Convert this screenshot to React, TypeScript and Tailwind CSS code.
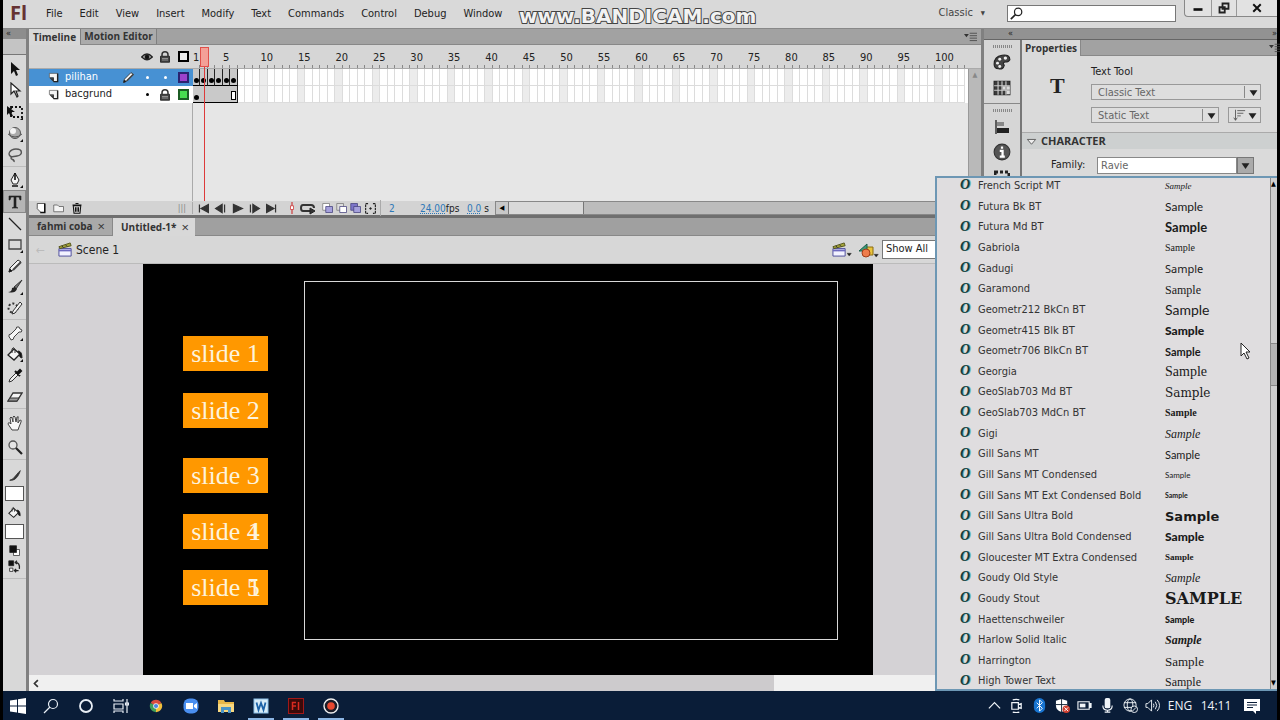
import React from "react";
import type { ReactNode } from "react";

const MENUS = ["File", "Edit", "View", "Insert", "Modify", "Text", "Commands", "Control", "Debug", "Window"];

const serif = "font-['Liberation_Serif',serif]";
const FONTS: { name: string; sample?: string; cls: string }[] = [
  { name: "French Script MT", cls: "font-['Liberation_Serif',serif] text-[9px] italic" },
  { name: "Futura Bk BT", cls: "font-['Lato',sans-serif] text-[12px]" },
  { name: "Futura Md BT", cls: "font-['Lato',sans-serif] text-[13px] font-bold" },
  { name: "Gabriola", cls: "font-['Liberation_Serif',serif] text-[10px]" },
  { name: "Gadugi", cls: "font-['Noto_Sans',sans-serif] text-[11px]" },
  { name: "Garamond", cls: "font-['Liberation_Serif',serif] text-[12px]" },
  { name: "Geometr212 BkCn BT", cls: "font-['Lato',sans-serif] text-[14px]" },
  { name: "Geometr415 Blk BT", cls: "font-['Lato',sans-serif] text-[12px] font-black" },
  { name: "Geometr706 BlkCn BT", cls: "font-['Lato',sans-serif] text-[11px] font-bold" },
  { name: "Georgia", cls: "font-['Liberation_Serif',serif] text-[14px]" },
  { name: "GeoSlab703 Md BT", cls: "font-['DejaVu_Serif',serif] text-[12px]" },
  { name: "GeoSlab703 MdCn BT", cls: "font-['Liberation_Serif',serif] text-[10px] font-bold" },
  { name: "Gigi", cls: "font-['Liberation_Serif',serif] text-[12px] italic" },
  { name: "Gill Sans MT", cls: "font-['Lato',sans-serif] text-[11px]" },
  { name: "Gill Sans MT Condensed", cls: "font-['Lato',sans-serif] text-[8px]" },
  { name: "Gill Sans MT Ext Condensed Bold", cls: "font-['Lato',sans-serif] text-[7px] font-bold" },
  { name: "Gill Sans Ultra Bold", cls: "font-['DejaVu_Sans',sans-serif] text-[13px] font-bold" },
  { name: "Gill Sans Ultra Bold Condensed", cls: "font-['Lato',sans-serif] text-[12px] font-black" },
  { name: "Gloucester MT Extra Condensed", cls: "font-['Liberation_Serif',serif] text-[9px] font-bold" },
  { name: "Goudy Old Style", cls: "font-['Liberation_Serif',serif] text-[12px] italic" },
  { name: "Goudy Stout", sample: "SAMPLE", cls: "font-['DejaVu_Serif',serif] text-[16px] font-black" },
  { name: "Haettenschweiler", cls: "font-['Lato',sans-serif] text-[9px] font-black" },
  { name: "Harlow Solid Italic", cls: "font-['Liberation_Serif',serif] text-[12px] font-bold italic" },
  { name: "Harrington", cls: "font-['Liberation_Serif',serif] text-[13px]" },
  { name: "High Tower Text", cls: "font-['Liberation_Serif',serif] text-[12px]" },
];

const FRAMES = Array.from({ length: 103 }, (_, i) => i + 1);

function Icon({ size = 16, box = 16, children }: { size?: number; box?: number; children: ReactNode }) {
  return (
    <svg width={size} height={size} viewBox={`0 0 ${box} ${box}`} fill="none" stroke="#222" strokeWidth="1" className="shrink-0" aria-hidden="true">
      {children}
    </svg>
  );
}

const corner = <path d="M16 13v3h-3z" fill="#111" stroke="none" />;

function Pencil() {
  return (
    <>
      <path d="M2 14l1-4 8-8 3 2-8 8z" fill="#f4f4f4" stroke="#333" />
      <path d="M6 12l8-8" stroke="#444" strokeWidth="2" />
      <path d="M2 14l1-3 2 2z" fill="#111" />
    </>
  );
}

function Bucket() {
  return (
    <>
      <path d="M1 9l6-6 6 5-6 6z" fill="#f5f5f5" stroke="#222" strokeWidth="1.3" />
      <path d="M5 7V3q2-3 3 1v3" stroke="#333" />
      <path d="M11 5q4 0 4 7l-2-1-1-4z" fill="#111" />
    </>
  );
}

type Tool = { label: string; active?: boolean; art: ReactNode };

const TOOL_GROUPS: { height: string; tools: Tool[] }[] = [
  {
    height: "h-[109px]",
    tools: [
      { label: "Selection", art: <path d="M4 1v12l3-3 2 5 2-1-2-5h4z" fill="#111" stroke="none" /> },
      { label: "Subselection", art: <path d="M4 1v11l3-3 3 6 1-1-2-5h4z" fill="#fff" stroke="#222" strokeWidth="1.2" /> },
      {
        label: "Free transform",
        art: (
          <>
            <path d="M4 3h11v10H4z" stroke="#111" strokeDasharray="2 2" strokeWidth="1.8" />
            <path d="M0 2v9l2-2 2 4 2-1-2-4h4z" fill="#111" stroke="none" />
            {corner}
          </>
        ),
      },
      {
        label: "3D rotation",
        art: (
          <>
            <circle cx="8" cy="7" r="5.5" fill="#aaa" stroke="#555" />
            <circle cx="6" cy="5" r="3" fill="#f4f4f4" stroke="none" />
            <path d="M1 8q7 6 14 0" stroke="#555" />
            {corner}
          </>
        ),
      },
      {
        label: "Lasso",
        art: <path d="M5 10c-6-2-2-8 4-8 7 0 7 6 1 7-3 1-6 0-6 2s4 1 3 4" stroke="#555" strokeWidth="1.4" />,
      },
    ],
  },
  {
    height: "h-[151px]",
    tools: [
      {
        label: "Pen",
        art: (
          <>
            <path d="M8 1l4 7-2 4H6L4 8z" fill="#f4f4f4" stroke="#222" />
            <path d="M8 1v7M5 14h6" stroke="#111" strokeWidth="1.6" />
            {corner}
          </>
        ),
      },
      { label: "Text", active: true, art: <path d="M2 2h12v4h-1l-1-3H9v10l2 1H5l2-1V3H4L3 6H2z" fill="#222" stroke="#222" strokeWidth="0.6" /> },
      { label: "Line", art: <path d="M2 2l12 12" stroke="#222" strokeWidth="1.3" /> },
      {
        label: "Rectangle",
        art: (
          <>
            <path d="M2 3h12v9H2z" fill="#d9d9d9" stroke="#444" strokeWidth="1.3" />
            {corner}
          </>
        ),
      },
      { label: "Pencil", art: <Pencil /> },
      {
        label: "Brush",
        art: (
          <>
            <path d="M15 1L7 8l2 2z" fill="#777" stroke="#333" />
            <path d="M1 13q4 0 4-4l3-1 2 2q-2 5-9 3z" fill="#222" stroke="none" />
            {corner}
          </>
        ),
      },
      {
        label: "Deco",
        art: (
          <>
            <circle cx="6" cy="8" r="4.5" stroke="#333" strokeWidth="2" strokeDasharray="2 2" />
            <path d="M6 11l7-9 2 2-7 9-3 1z" fill="#f4f4f4" stroke="#333" />
          </>
        ),
      },
    ],
  },
  {
    height: "h-[87px]",
    tools: [
      {
        label: "Bone",
        art: (
          <>
            <path d="M2 12q-1-3 2-3l5-5q0-3 3-2l1 2 2 1q0 3-3 2l-5 5q0 3-3 3l-1-2z" fill="#f6f6f6" stroke="#444" />
            {corner}
          </>
        ),
      },
      {
        label: "Paint bucket",
        art: (
          <>
            <Bucket />
            {corner}
          </>
        ),
      },
      {
        label: "Eyedropper",
        art: (
          <>
            <path d="M2 14l1-3 6-6 2 2-6 6z" fill="#eee" stroke="#333" />
            <path d="M8 3l5 5M10 5l3-3 1 1-3 3z" stroke="#111" strokeWidth="2" />
          </>
        ),
      },
      {
        label: "Eraser",
        art: (
          <>
            <path d="M1 12l5-8h9l-5 8z" fill="#f4f4f4" stroke="#333" strokeWidth="1.3" />
            <path d="M3 9h9l-2 3H1z" fill="#999" stroke="#333" />
          </>
        ),
      },
    ],
  },
  {
    height: "h-[49px]",
    tools: [
      {
        label: "Hand",
        art: <path d="M5 15l-4-6q0-2 2-1l1 1-1-6q1-2 2 0l1 4V2q1-2 2 0l1 5 1-5q2-1 1 1v5l2-3q2 0 1 2l-2 5-1 3z" fill="#f8f8f8" stroke="#444" />,
      },
      {
        label: "Zoom",
        art: (
          <>
            <circle cx="6" cy="6" r="4" fill="#e4e4e4" stroke="#555" strokeWidth="1.3" />
            <path d="M9 9l6 6" stroke="#222" strokeWidth="2.2" />
          </>
        ),
      },
    ],
  },
];

function Toolbar() {
  return (
    <aside className="flex w-[23px] shrink-0 flex-col bg-[#d8d8d8]">
      <div className="h-[10px] bg-[#8d8d8d] pl-[3px] text-[9px] leading-[9px] text-[#222]">«</div>
      <div className="mb-[3px] h-[16px] border-b border-[#777] bg-[#c4c4c4]" />
      {TOOL_GROUPS.map((g) => (
        <div key={g.tools[0].label} className={`flex flex-col border-b border-[#bdbdbd] ${g.height} mb-[2px]`}>
          {g.tools.map((t) => (
            <button
              key={t.label}
              type="button"
              aria-label={t.label}
              className={`flex min-h-0 flex-1 items-center justify-center ${t.active ? "border border-[#888] bg-[#b5b5b5]" : ""}`}
            >
              <Icon size={16}>{t.art}</Icon>
            </button>
          ))}
        </div>
      ))}
      <div className="flex flex-col items-center border-b border-[#bdbdbd] pt-[6px] pb-[5px]">
        <Icon size={14}>
          <path d="M2 14q3-1 4-2l6-7 2-2-1 3q-4 9-11 8" fill="#333" stroke="#333" />
        </Icon>
        <button type="button" aria-label="Stroke color" className="mt-[4px] h-[15px] w-[19px] border border-[#555] bg-white" />
        <div className="my-[5px]">
          <Icon size={13}>
            <Bucket />
          </Icon>
        </div>
        <button type="button" aria-label="Fill color" className="h-[15px] w-[19px] border border-[#555] bg-white" />
        <button type="button" aria-label="Black and white" className="mt-[6px]">
          <Icon size={12}>
            <path d="M6 6h8v8H6z" fill="#fff" stroke="#333" />
            <path d="M1 1h9v9H1z" fill="#111" />
          </Icon>
        </button>
        <button type="button" aria-label="Swap colors" className="mt-[3px]">
          <Icon size={13}>
            <path d="M1 1h6v6H1z" fill="#111" />
            <path d="M2 10h4v4H2z" fill="#fff" />
            <path d="M9 3q6 0 5 8M8 13h5M10 11l-2 2 2 2M11 1L9 3l2 2" strokeWidth="1.6" />
          </Icon>
        </button>
      </div>
    </aside>
  );
}

function PageIcon() {
  return (
    <Icon size={11}>
      <path d="M2 2h12v12H8V8H2z" fill="#f4f4f4" stroke="#555" />
      <path d="M14 2v12H8" stroke="#222" strokeWidth="2" />
      <path d="M3 9l5 5V9z" fill="#333" stroke="#333" />
    </Icon>
  );
}

function Lock() {
  return (
    <Icon size={12}>
      <path d="M4 7V5q0-4 4-4t4 4v2" stroke="#333" strokeWidth="2" />
      <path d="M2 7h12v8H2z" fill="#444" stroke="#111" />
      <path d="M4 10h8M4 12h8" stroke="#aaa" />
    </Icon>
  );
}

const layerGrid = "grid w-[164px] shrink-0 grid-cols-[36px_1fr_20px_18px_18px_19px] items-center";
const frameGrid = "grid min-w-0 flex-1 grid-cols-[repeat(103,minmax(0,1fr))]";

function PanelMenuIcon() {
  return (
    <Icon size={13}>
      <path d="M0 5h6L3 9z" fill="#333" stroke="none" />
      <path d="M7 4h9M7 7h9M7 10h9M7 13h9" stroke="#444" />
    </Icon>
  );
}

function LayerRow({ name, selected }: { name: string; selected?: boolean }) {
  return (
    <div className="flex h-[17px]">
      <div className={`${layerGrid} ${selected ? "bg-[#4791d3] text-white" : "bg-white text-[#222]"}`}>
        <span className="flex justify-end pr-[6px]">
          <PageIcon />
        </span>
        <span className="pb-[2px] leading-[14px]">{name}</span>
        <span className="flex justify-center">
          {selected && (
            <Icon size={13}>
              <Pencil />
            </Icon>
          )}
        </span>
        <span className="flex justify-center">
          <i className={`size-[3px] rounded-full ${selected ? "bg-white" : "bg-black"}`} />
        </span>
        <span className="flex justify-center">{selected ? <i className="size-[3px] rounded-full bg-white" /> : <Lock />}</span>
        <span className="flex justify-center">
          <i className={`size-[11px] border-2 ${selected ? "border-[#2b2370] bg-[#9c42cc]" : "border-[#1c5c24] bg-[#48dc50]"}`} />
        </span>
      </div>
      <div className={frameGrid}>
        {FRAMES.map((f) => {
          const keyed = f <= 6;
          if (!keyed)
            return <span key={f} className={`border-r border-b border-[#dcdcdc] ${f % 5 === 0 ? "bg-[#ececec]" : "bg-white"}`} />;
          return (
            <span
              key={f}
              className={`flex items-end justify-center border-b border-b-black bg-[#c9c9c9] pb-[2px] ${selected || f === 6 ? "border-r border-r-[#222]" : ""}`}
            >
              {(selected || f === 1) && <i className="size-[5px] shrink-0 rounded-full bg-black" />}
              {!selected && f === 6 && <i className="h-[9px] w-[5px] shrink-0 border border-black bg-white" />}
            </span>
          );
        })}
      </div>
      <div className="w-[3px] shrink-0 bg-white" />
    </div>
  );
}

const PLAYBACK: { label: string; d: string }[] = [
  { label: "First frame", d: "M3 3v10M14 3v10L5 8z" },
  { label: "Step back", d: "M13 3v10M10 3v10L2 8z" },
  { label: "Play", d: "M3 3v10l11-5z" },
  { label: "Step forward", d: "M3 3v10M6 3v10l8-5z" },
  { label: "Last frame", d: "M13 3v10M2 3v10l9-5z" },
];

function Timeline() {
  return (
    <section className="flex h-[189px] shrink-0 flex-col border-b-[3px] border-[#6f6f6f] bg-[#e6e6e6]">
      <div className="flex h-4 shrink-0 items-stretch border-b border-[#888] bg-[#a2a2a2] font-['Open_Sans',sans-serif] text-[10px] font-bold text-[#333]">
        <button type="button" className="-mb-px w-[51px] bg-[#d8d8d8]">Timeline</button>
        <button type="button" className="w-[77px] border-x border-[#808080] bg-[#ababab]">Motion Editor</button>
        <button type="button" aria-label="Panel menu" className="mr-[4px] ml-auto">
          <PanelMenuIcon />
        </button>
      </div>
      <div className="relative flex min-h-0 flex-1 flex-col">
        <div className="flex h-[24px] shrink-0 border-b border-[#aaa] bg-[#d6d6d6]">
          <div className={layerGrid}>
            <span className="col-start-4 flex justify-center">
              <Icon size={12}>
                <path d="M1 8q7-8 14 0-7 7-14 0z" fill="#eee" stroke="#222" strokeWidth="2" />
                <circle cx="8" cy="8" r="3" fill="#111" />
              </Icon>
            </span>
            <span className="flex justify-center">
              <Lock />
            </span>
            <span className="flex justify-center">
              <i className="size-[11px] border-2 border-black bg-[#eee]" />
            </span>
          </div>
          <div className={frameGrid}>
            {FRAMES.map((f) => (
              <span key={f} className="flex min-w-0 flex-col justify-between overflow-visible pt-[6px] text-[#222]">
                <span className="h-[14px] whitespace-nowrap leading-[14px]">{f === 1 || f % 5 === 0 ? f : ""}</span>
                <i className="h-[3px] border-r border-[#888]" />
              </span>
            ))}
          </div>
          <div className="w-[16px] shrink-0" />
        </div>
        <div className="flex min-h-0 flex-1">
          <div className="flex min-w-0 flex-1 flex-col">
            <LayerRow name="pilihan" selected />
            <LayerRow name="bacgrund" />
            <div className="w-[164px] flex-1 border-r border-[#aaa]" />
          </div>
          <div className="w-[13px] shrink-0 border-l border-[#999] bg-[#b9b9b9] text-center text-[7px] leading-[12px] text-[#888]">▲</div>
        </div>
        <div className="pointer-events-none absolute top-[2px] bottom-[6px] left-[171px] flex w-[9px] flex-col items-center">
          <i className="h-[20px] w-full border border-[#e0504a] bg-[#f79a90]/90" />
          <i className="w-px flex-1 bg-[#dd3a3a]" />
        </div>
        <div className="relative flex h-[14px] shrink-0 items-center bg-[#d3d3d3]">
          <div className="flex w-[164px] items-center gap-[6px] border-r border-[#aaa] pl-[6px]">
            <button type="button" aria-label="New layer"><Icon size={12}><path d="M3 2h10v12H8l-5-5z" fill="#fff" stroke="#333" /><path d="M13 2v12H7" stroke="#111" strokeWidth="2" /></Icon></button>
            <button type="button" aria-label="New folder"><Icon size={12}><path d="M1 13V4h5l2 2h6v7z" fill="#f4f4f4" stroke="#555" /></Icon></button>
            <button type="button" aria-label="Delete"><Icon size={12}><path d="M3 5h10l-1 10H4zM2 4h12M6 2h4M6 7v6M8 7v6M10 7v6" stroke="#111" strokeWidth="1.4" /></Icon></button>
            <span className="mr-[6px] ml-auto text-[9px] leading-none text-[#888]">|||</span>
          </div>
          <div className="flex items-center gap-[4px] pl-[4px]">
            {PLAYBACK.map((p) => (
              <button key={p.label} type="button" aria-label={p.label}>
                <Icon size={13}>
                  <path d={p.d} fill="#333" stroke="#333" strokeWidth="1.5" />
                </Icon>
              </button>
            ))}
          </div>
          <div className="ml-[8px] flex items-center gap-[2px] border-r border-[#aaa] pr-[3px]">
            <Icon size={12}><path d="M8 0v16" stroke="#c33" strokeWidth="1.5" /><path d="M6 5h4v5H6z" fill="#fff" stroke="#c33" /></Icon>
            <button type="button" aria-label="Loop" className="mr-[4px]"><Icon size={16}><path d="M5 5H3q-2 0-2 3t2 3h8M4 5h7q3 0 3 3" stroke="#333" strokeWidth="2" /><path d="M10 8l5 3-5 3z" fill="#333" /></Icon></button>
            <Icon size={12}><path d="M1 2h9v9H1z" fill="#fff" stroke="#777" /><path d="M5 6h9v8H5z" fill="#a5a0dc" stroke="#44407c" /></Icon>
            <Icon size={12}><path d="M1 2h9v9H1z" fill="#ddd" stroke="#777" /><path d="M5 6h9v8H5z" fill="#fff" stroke="#44407c" /></Icon>
            <Icon size={12}><path d="M1 2h9v9H1z" fill="#7c74c8" stroke="#44407c" /><path d="M5 6h9v8H5z" fill="#a5a0dc" stroke="#44407c" /></Icon>
            <Icon size={13}><path d="M5 2H2v12h3M11 2h3v12h-3" strokeWidth="1.4" strokeDasharray="3 1" /><circle cx="8" cy="8" r="1" fill="#222" /></Icon>
          </div>
          <div className="flex items-center text-[10px] leading-[13px] text-[#2d78b8]">
            <span className="ml-[8px] w-[31px]">2</span>
            <span className="w-[47px] whitespace-nowrap"><u className="decoration-dotted">24.00</u><span className="text-[#222]">fps</span></span>
            <span className="w-[28px] whitespace-nowrap"><u className="decoration-dotted">0.0</u><span className="text-[#222]"> s</span></span>
          </div>
          <div className="flex h-full min-w-0 flex-1 border border-[#888] bg-[#bcbcbc]">
            <button type="button" aria-label="Scroll left" className="w-[13px] border-r border-[#777] bg-[#c8c8c8] text-[7px] leading-[10px]">◀</button>
            <div className="w-[75px] border-r border-[#777] bg-[#d9d9d9]" />
          </div>
        </div>
      </div>
    </section>
  );
}

function Clapper() {
  return (
    <Icon size={15}>
      <path d="M1 7h13v8H1z" fill="#f2f2ff" stroke="#4a4a9a" />
      <path d="M1 8h13v2H1z" fill="#6e6ac0" stroke="none" />
      <path d="M1 5l12-4 1 3-12 3z" fill="#a5a53a" stroke="#55551a" />
      <path d="M4 4l2 2M8 3l2 2" stroke="#333" />
    </Icon>
  );
}

const SLIDES: { text: string; ghost?: string; top: string }[] = [
  { text: "1", top: "top-[72px]" },
  { text: "2", top: "top-[129px]" },
  { text: "3", top: "top-[194px]" },
  { text: "4", ghost: "1", top: "top-[250px]" },
  { text: "5", ghost: "1", top: "top-[306px]" },
];

function Document() {
  return (
    <section className="flex min-h-0 flex-1 flex-col">
      <div className="flex h-[18px] shrink-0 items-stretch border-b border-[#888] bg-[#a0a0a0] font-['Open_Sans',sans-serif] text-[10px] font-bold whitespace-nowrap text-[#333]">
        <button type="button" className="flex w-[84px] items-center justify-between border-r border-[#888] bg-[#a9a9a9] pr-[7px] pl-[8px]">
          fahmi coba <span className="text-[13px] leading-none font-normal">×</span>
        </button>
        <button type="button" className="-mb-px flex w-[82px] items-center justify-between bg-[#d8d8d8] pr-[6px] pl-[8px]">
          Untitled-1* <span className="text-[13px] leading-none font-normal">×</span>
        </button>
      </div>
      <div className="flex h-[28px] shrink-0 items-center border-b border-[#bbb] bg-[#d7d7d7]">
        <span className="w-[29px] pl-[7px] text-[12px] text-[#bbb]">←</span>
        <Clapper />
        <span className="ml-[3px] flex-1 text-[12px] text-[#222]">Scene 1</span>
        <button type="button" aria-label="Edit scene" className="flex w-[26px] items-end">
          <Clapper />
          <Icon size={5}><path d="M0 4h14l-7 9z" fill="#222" /></Icon>
        </button>
        <button type="button" aria-label="Edit symbols" className="flex w-[24px] items-end">
          <Icon size={16}>
            <path d="M8 5h7v8H8z" fill="#e8c43c" stroke="#8a6a10" />
            <path d="M1 9l8-7v7z" fill="#3c9a78" stroke="#1c5c48" />
            <circle cx="8" cy="11" r="4" fill="#ee7c4c" stroke="#a03c18" />
          </Icon>
          <Icon size={5}><path d="M0 4h14l-7 9z" fill="#222" /></Icon>
        </button>
        <select aria-label="Zoom level" className="mr-[4px] h-[19px] w-[95px] appearance-none border border-[#777] bg-white pl-[3px] text-[11px] text-[#222]">
          <option>Show All</option>
        </select>
      </div>
      <div className="flex min-h-0 flex-1 overflow-hidden bg-[#d4d2d5] pl-[114px]">
        <div className="relative h-full w-[730px] shrink-0 bg-black">
          {SLIDES.map((s) => (
            <div
              key={s.text}
              className={`absolute left-[40px] ${s.top} flex h-[35px] w-[85px] items-center justify-center bg-[#ff9800] ${serif} text-[26px] leading-none text-[#fdf3dc]`}
            >
              slide {s.text}
              {s.ghost && <span className="absolute right-[7px]">{s.ghost}</span>}
            </div>
          ))}
          <div className="absolute top-[17px] left-[161px] h-[359px] w-[534px] border border-[#d8d8d8]" />
        </div>
      </div>
      <div className="flex h-4 shrink-0 bg-[#f0f0f0]">
        <button type="button" aria-label="Scroll left" className="flex w-[191px] items-center pl-[2px]">
          <Icon size={11}><path d="M10 3L5 8l5 5" stroke="#333" strokeWidth="2.4" /></Icon>
        </button>
        <div className="w-[554px] bg-[#cdcbcd]" />
      </div>
    </section>
  );
}

function Grip() {
  return <i className="my-[5px] block h-[3px] w-[19px] shrink-0 bg-[repeating-linear-gradient(90deg,#888_0_1px,transparent_1px_2px)]" />;
}

function Dock() {
  return (
    <div className="flex w-[38px] shrink-0 flex-col items-center overflow-hidden border-r-2 border-[#777] bg-[#d6d6d6]">
      <Grip />
      <button type="button" aria-label="Color">
        <Icon size={18}>
          <path d="M1 10Q1 3 8 2t7 4q-1 2-4 2t-1 3q-1 4-5 3-4 0-4-4z" fill="#444" />
          <circle cx="4" cy="9" r="1.3" fill="#eee" stroke="none" />
          <circle cx="6" cy="5.5" r="1.3" fill="#eee" stroke="none" />
          <circle cx="11" cy="4.5" r="1.5" fill="#eee" stroke="none" />
          <circle cx="6" cy="12" r="1.3" fill="#eee" stroke="none" />
        </Icon>
      </button>
      <button type="button" aria-label="Swatches" className="mt-[8px]">
        <Icon size={18}>
          <path d="M1 2h14v12H1z" fill="#3a3a3a" />
          <path d="M1 6h14M1 10h14M4.5 2v12M8 2v12M11.5 2v12" stroke="#ccc" />
          <path d="M8.5 6.5H11v3H8.5zM12 10.5h3v3h-3zM12 6.5h3v3h-3z" fill="#ddd" stroke="none" />
        </Icon>
      </button>
      <div className="mt-[6px] w-full border-t border-[#888]" />
      <Grip />
      <button type="button" aria-label="Align" className="mt-[2px]">
        <Icon size={16}>
          <path d="M2 1v14" stroke="#333" strokeWidth="1.5" />
          <path d="M3 3h7v4H3z" fill="#888" stroke="none" />
          <path d="M3 9h12v5H3z" fill="#222" stroke="none" />
        </Icon>
      </button>
      <button type="button" aria-label="Info" className="mt-[8px]">
        <Icon size={18}>
          <circle cx="8" cy="8" r="7" fill="#555" stroke="#333" />
          <path d="M8 3v2M6 7h2.5v5M6 12h4.5" stroke="#fff" strokeWidth="2" />
        </Icon>
      </button>
      <button type="button" aria-label="Transform" className="mt-[8px]">
        <Icon size={16}><path d="M1 3h14v10H1z" stroke="#222" strokeDasharray="3 2" strokeWidth="3" /></Icon>
      </button>
    </div>
  );
}

function DownArrow() {
  return (
    <Icon size={9}>
      <path d="M1 4h14l-7 10z" fill="#222" stroke="none" />
    </Icon>
  );
}

function Drop({ label, value, width }: { label: string; value: string; width: string }) {
  return (
    <span className={`relative flex h-[16px] ${width}`}>
      <select aria-label={label} className="h-full w-full appearance-none border border-[#999] bg-[#dedede] pl-[6px] text-[11px] leading-[13px] text-[#666]">
        <option>{value}</option>
      </select>
      <span className="pointer-events-none absolute inset-y-[2px] right-[3px] flex items-center border-l border-[#888] pl-[4px]">
        <DownArrow />
      </span>
    </span>
  );
}

function Properties() {
  return (
    <section className="flex min-w-0 flex-1 flex-col bg-[#dadada]">
      <div className="flex h-4 shrink-0 border-b border-[#888] bg-[#a2a2a2] font-['Open_Sans',sans-serif] text-[10px] font-bold text-[#333]">
        <button type="button" className="-mb-px w-[59px] border-r border-[#888] bg-[#dadada]">Properties</button>
        <button type="button" aria-label="Panel menu" className="-mr-[5px] ml-auto"><PanelMenuIcon /></button>
      </div>
      <div className="flex h-[77px] shrink-0 border-b border-[#aaa]">
        <span className={`w-[69px] pt-[17px] pl-[28px] ${serif} text-[22px] leading-[26px] font-bold text-[#222]`}>T</span>
        <div className="flex flex-col pt-[9px]">
          <span className="mb-[5px] leading-[14px] text-[#222]">Text Tool</span>
          <Drop label="Text engine" value="Classic Text" width="w-[170px]" />
          <div className="mt-[7px] flex gap-[9px]">
            <Drop label="Text type" value="Static Text" width="w-[128px]" />
            <button type="button" aria-label="Text orientation" className="flex h-[16px] w-[33px] items-center justify-center gap-[2px] border border-[#999] bg-[#dedede]">
              <Icon size={14}><path d="M4 2v12M2 11l2 3 2-3M6 3h9M6 6h7M6 9h4" stroke="#555" /></Icon>
              <DownArrow />
            </button>
          </div>
        </div>
      </div>
      <h2 className="flex h-[16px] items-center gap-[4px] bg-[#cdd0d0] pl-[4px] font-['Open_Sans',sans-serif] text-[11px] font-bold text-[#333]">
        <Icon size={11}><path d="M2 5h12l-6 7z" fill="#eee" stroke="#555" strokeWidth="1.3" /></Icon>
        CHARACTER
      </h2>
      <div className="mt-[8px] flex items-center pl-[29px]">
        <label htmlFor="family" className="w-[46px] text-[#222]">Family:</label>
        <input id="family" defaultValue="Ravie" className="h-[17px] w-[140px] border border-[#888] bg-white pl-[3px] text-[11px] text-[#666]" />
        <button type="button" aria-label="Show fonts" className="flex h-[17px] w-[17px] items-center justify-center border border-[#777] bg-[#aaa]"><DownArrow /></button>
      </div>
    </section>
  );
}

function FontMenu() {
  return (
    <div className="absolute top-[176px] right-[3px] z-10 flex h-[515px] w-[342px] overflow-hidden border-2 border-r-0 border-[#6d97b4] bg-[#dfdddf]">
      <ul role="listbox" aria-label="Fonts" className="-mt-[2px] flex h-[516px] flex-1 flex-col text-[#333]">
        {FONTS.map((f) => (
          <li key={f.name} role="option" aria-selected="false" className="grid min-h-0 flex-1 grid-cols-[18px_187px_1fr] items-center pl-[23px] whitespace-nowrap">
            <span className={`${serif} pb-[2px] text-[14px] leading-none font-bold text-[#173c3c] italic [text-shadow:1px_0_#6fb0a8]`}>O</span>
            <span>{f.name}</span>
            <span className={`leading-none text-[#1a1a1a] ${f.cls}`}>{f.sample ?? "Sample"}</span>
          </li>
        ))}
      </ul>
      <div className="flex w-[7px] shrink-0 flex-col overflow-hidden border-l border-[#888] bg-[#cfcfcf] text-[7px] leading-[12px]">
        <span>▲</span>
        <div className="mt-[153px] h-[43px] border-y border-[#888] bg-[#b3b3b3]" />
        <span className="mt-auto">▼</span>
      </div>
    </div>
  );
}

const TASKS: { label: string; open?: boolean; art: ReactNode }[] = [
  { label: "Search", art: <><circle cx="10" cy="6" r="4.5" stroke="#e8eef5" strokeWidth="1.2" /><path d="M7 9l-6 6" stroke="#e8eef5" strokeWidth="1.3" /></> },
  { label: "Cortana", art: <circle cx="8" cy="8" r="6" stroke="#e8eef5" strokeWidth="1.8" /> },
  { label: "Task view", art: <path d="M1 1v2h9V1M1 6h9v5H1zM1 15v-2h9v2M14 1v14M12.5 5h3v2h-3z" stroke="#e8eef5" strokeWidth="1.2" /> },
  {
    label: "Chrome",
    art: (
      <g stroke="none">
        <path d="M8 8L1.9 4.5A7 7 0 0 1 14.1 4.5z" fill="#d94b3e" />
        <path d="M8 8l6.1-3.5A7 7 0 0 1 8 15z" fill="#f2c03c" />
        <path d="M8 8v7A7 7 0 0 1 1.9 4.5z" fill="#3f9d58" />
        <circle cx="8" cy="8" r="3.2" fill="#f2f2f2" />
        <circle cx="8" cy="8" r="2.4" fill="#4a84e0" />
      </g>
    ),
  },
  { label: "Zoom", art: <g stroke="none"><rect x="0.5" y="0.5" width="15" height="15" rx="6" fill="#4a8ff0" /><path d="M3 5h7v6H3zM11 7l3-2v6l-3-2z" fill="#fff" /></g> },
  { label: "File explorer", art: <g stroke="none"><path d="M0 2h6l1 2h9v10H0z" fill="#e8b84a" /><path d="M0 6h16v8H0z" fill="#f8d880" /><path d="M3 9h10v6h-3v-3H6v3H3z" fill="#4a94c8" /></g> },
  { label: "Word", open: true, art: <><rect x="1" y="1" width="14" height="14" fill="#d8ecf8" stroke="#8cc0e8" /><path d="M3.5 4.5L5.5 12 8 5l2.5 7 2-7.5" stroke="#1c62a8" strokeWidth="1.8" /></> },
  { label: "Flash", open: true, art: <><rect x="0.5" y="0.5" width="15" height="15" fill="#3a0a0a" stroke="#a01818" /><path d="M4.5 12V4.5H8M4.5 8H8M10.5 4v8" stroke="#d82a20" strokeWidth="1.5" /></> },
  { label: "Recorder", open: true, art: <><circle cx="8" cy="8" r="7" fill="#1c1c28" stroke="#eee" strokeWidth="1.4" /><circle cx="8" cy="8" r="3.8" fill="#e84830" stroke="none" /></> },
];

const trayInk = "#f0f4f8";
const TRAY: { label: string; art: ReactNode }[] = [
  { label: "Show hidden icons", art: <path d="M2 11l6-6 6 6" stroke={trayInk} strokeWidth="1.3" /> },
  { label: "Meet now", art: <path d="M3 5h7v7H3zM10 7l3-1v5l-3-1M4 2q4-1 7 0M4 15q4 1 7 0" stroke={trayInk} strokeWidth="1.3" /> },
  { label: "Bluetooth", art: <><rect x="2" y="0" width="12" height="16" rx="6" fill="#1874d0" stroke="none" /><path d="M5 5l6 6-3 3V2l3 3-6 6" stroke="#fff" /></> },
  { label: "Security", art: <g stroke="none"><path d="M7 1l6 2v5q-1 5-6 7-6-2-6-7V3z" fill="#fff" /><path d="M7 1v14M1 7h12" stroke="#123" /><circle cx="12" cy="12" r="4" fill="#d04030" /><path d="M10 10l4 4M14 10l-4 4" stroke="#fff" /></g> },
  { label: "Battery", art: <><path d="M1 4h12v8H1zM14 6v4h1V6z" stroke={trayInk} strokeWidth="1.2" /><path d="M3 6h6v4H3z" fill={trayInk} stroke="none" /></> },
  { label: "Microphone", art: <><rect x="5" y="0" width="6" height="11" rx="2" fill={trayInk} stroke="none" /><path d="M3 8q0 5 5 5t5-5M8 13v2M5 15h6" stroke={trayInk} strokeWidth="1.2" /></> },
  { label: "Network", art: <><circle cx="7.5" cy="7.5" r="6.5" stroke={trayInk} /><ellipse cx="7.5" cy="7.5" rx="3" ry="6.5" stroke={trayInk} /><path d="M1 5h13M1 10h13" stroke={trayInk} /><circle cx="12" cy="12" r="3.5" fill="#0a1d38" stroke={trayInk} /><path d="M10 14l4-4" stroke={trayInk} /></> },
  { label: "Volume", art: <path d="M1 6v4h2l4 4V2L3 6zM9 6q1 2 0 4M11 4q3 4 0 8M13 2q5 6 0 12" stroke={trayInk} /> },
];

function Taskbar() {
  return (
    <footer className="flex h-[29px] shrink-0 items-stretch bg-[#0a1d38] font-['Open_Sans',sans-serif] text-[12px] text-[#f0f4f8]">
      <button type="button" aria-label="Start" className="flex w-[30px] items-center justify-center">
        <Icon size={16}><path d="M0 2.5l7-1v6H0zM8 1.3L16 0v7.5H8zM0 8.5h7v6l-7-1zM8 8.5h8V16l-8-1.3z" fill="#fff" stroke="none" /></Icon>
      </button>
      {TASKS.map((t) => (
        <button key={t.label} type="button" aria-label={t.label} className="flex w-[35px] flex-col items-center">
          <span className="flex flex-1 items-center pt-[2px]"><Icon size={t.label === "Chrome" ? 14 : 16}>{t.art}</Icon></span>
          <i className={`h-[2px] w-[26px] ${t.open ? "bg-[#8db6e4]" : ""}`} />
        </button>
      ))}
      <div className="ml-auto grid w-[181px] grid-cols-8">
        {TRAY.map((t) => (
          <button key={t.label} type="button" aria-label={t.label} className="flex items-center justify-center">
            <Icon size={15}>{t.art}</Icon>
          </button>
        ))}
      </div>
      <button type="button" className="w-[32px]">ENG</button>
      <button type="button" className="w-[40px]">14:11</button>
      <button type="button" aria-label="Notifications" className="mr-[9px] flex w-[32px] items-center justify-center">
        <Icon size={16}><path d="M0 1h16v12h-4v3l-3-3H0z" fill="#fff" stroke="none" /><path d="M3 4.5h10M3 7h10M3 9.5h6" stroke="#0a1d38" /></Icon>
      </button>
    </footer>
  );
}

export default function App() {
  return (
    <div className="relative flex h-screen flex-col overflow-hidden bg-black px-[3px] font-['DejaVu_Sans_Condensed','DejaVu_Sans',sans-serif] text-[11px]">
      <header className="relative flex h-[29px] shrink-0 items-start border-b border-[#888] bg-[#d9d9d9]">
        <span className="w-[35px] pl-[7px] font-['Open_Sans',sans-serif] text-[20px] leading-[26px] font-bold text-[#633]">Fl</span>
        <nav className="flex items-center gap-px pt-[6px] text-[#222]">
          {MENUS.map((m) => (
            <button key={m} type="button" className="px-[8px] leading-[16px]">{m}</button>
          ))}
        </nav>
        <button type="button" className="mt-[5px] ml-auto flex items-center gap-[8px] leading-[16px] text-[#444]">
          Classic <span className="text-[6px]">▼</span>
        </button>
        <label className="mt-[5px] ml-[22px] flex h-[17px] w-[169px] items-center border border-[#777] bg-white pl-[2px]">
          <Icon size={13}><circle cx="10" cy="6" r="4.5" strokeWidth="1.5" /><path d="M7 9l-6 6" strokeWidth="2" /></Icon>
          <input aria-label="Search" className="min-w-0 flex-1 bg-transparent outline-none" />
        </label>
        <div className="ml-[8px] flex h-[17px] w-[93px] rounded-bl border-b border-l border-[#888] bg-[#e2e2e2]">
          <button type="button" aria-label="Minimize" className="flex w-[27px] items-center justify-center border-r border-[#999]">
            <Icon size={12}><path d="M2 10h12" stroke="#111" strokeWidth="3.5" /></Icon>
          </button>
          <button type="button" aria-label="Restore" className="flex w-[25px] items-center justify-center border-r border-[#999]">
            <Icon size={12}><path d="M6 2h8v7H6zM2 7h7v7H2z" fill="#e2e2e2" strokeWidth="2.4" /></Icon>
          </button>
          <button type="button" aria-label="Close" className="flex flex-1 items-center justify-center">
            <Icon size={12}><path d="M3 3l10 10M13 3L3 13" stroke="#111" strokeWidth="2.6" /></Icon>
          </button>
        </div>
        <div className="pointer-events-none absolute top-[4px] left-[516px] font-['DejaVu_Sans',sans-serif] text-[20px] leading-[24px] font-bold text-[#f2f2f2] [paint-order:stroke_fill] [-webkit-text-stroke:2px_#444]">
          www.BANDICAM.com
        </div>
      </header>
      <div className="flex min-h-0 flex-1">
        <Toolbar />
        <main className="flex min-w-0 flex-1 flex-col border-x-[3px] border-[#808080]">
          <Timeline />
          <Document />
        </main>
        <div className="flex w-[293px] shrink-0 flex-col">
          <div className="flex h-[11px] shrink-0 justify-between border-b border-[#666] bg-[#929292] pl-[24px] text-[9px] leading-[9px] text-[#222]">
            <span>«</span>
            <span>»</span>
          </div>
          <div className="flex min-h-0 flex-1">
            <Dock />
            <Properties />
          </div>
        </div>
      </div>
      <Taskbar />
      <FontMenu />
      <svg width="12" height="18" viewBox="0 0 12 18" className="pointer-events-none absolute top-[342px] right-[28px] z-20" aria-hidden="true">
        <path d="M1 1v13l3-3 3 6 2-1-3-6h4z" fill="#fff" stroke="#222" />
      </svg>
    </div>
  );
}
